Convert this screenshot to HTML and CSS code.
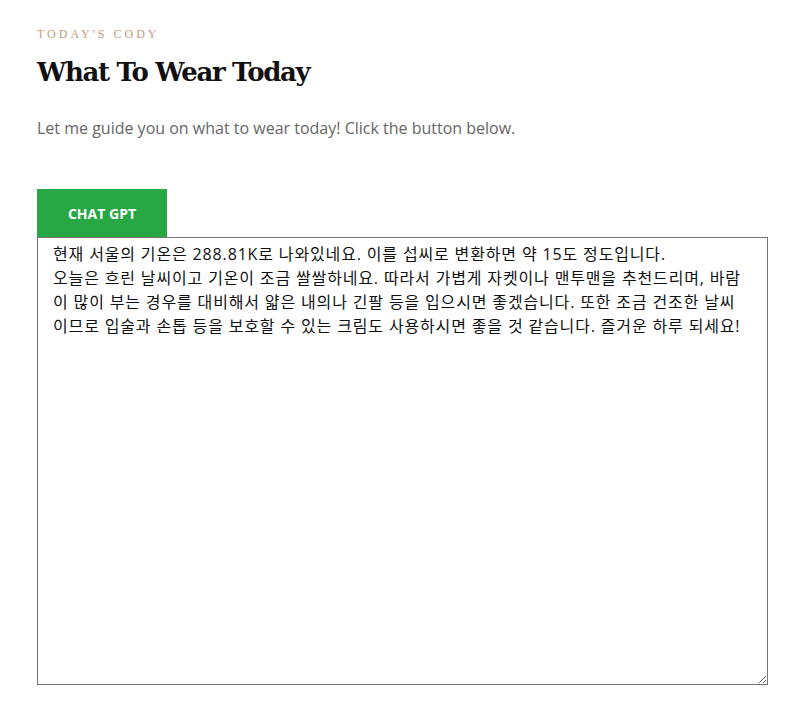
FILE: index.html
```html
<!DOCTYPE html>
<html lang="ko">
<head>
<meta charset="utf-8">
<link rel="stylesheet" href="styles.css">
</head>
<body>
<main class="page">
  <p class="eyebrow">TODAY'S CODY</p>
  <h1 class="title">What To Wear Today</h1>
  <p class="lead">Let me guide you on what to wear today! Click the button below.</p>
  <div class="chat">
    <button class="btn">CHAT GPT</button>
    <textarea class="answer">현재 서울의 기온은 288.81K로 나와있네요. 이를 섭씨로 변환하면 약 15도 정도입니다.
오늘은 흐린 날씨이고 기온이 조금 쌀쌀하네요. 따라서 가볍게 자켓이나 맨투맨을 추천드리며, 바람이 많이 부는 경우를 대비해서 얇은 내의나 긴팔 등을 입으시면 좋겠습니다. 또한 조금 건조한 날씨이므로 입술과 손톱 등을 보호할 수 있는 크림도 사용하시면 좋을 것 같습니다. 즐거운 하루 되세요!</textarea>
  </div>
</main>
</body>
</html>
```
FILE: styles.css
```css
html, body { margin: 0; padding: 0; background: #fff; }
.page { padding: 26px 26px 0 37px; }
.eyebrow {
  margin: 0;
  font-family: "Liberation Serif", serif;
  font-size: 12px;
  letter-spacing: 3px;
  color: #c49a7e;
  line-height: 16px;
}
.title {
  margin: 14px 0 0;
  font-family: "DejaVu Serif", serif;
  font-weight: bold;
  font-size: 26px;
  line-height: 32px;
  color: #111;
  letter-spacing: -1.3px;
}
.lead {
  margin: 28px 0 0;
  font-family: "Open Sans", sans-serif;
  font-size: 16px;
  line-height: 24px;
  color: #666;
}
.chat { margin-top: 49px; display: flex; flex-direction: column; align-items: flex-start; }
.btn {
  width: 130px;
  height: 48px;
  border: 0;
  background: #28a745;
  color: #fff;
  font-family: "Open Sans", sans-serif;
  font-weight: bold;
  font-size: 14px;
  cursor: pointer;
}
.answer {
  box-sizing: border-box;
  width: 731px;
  height: 448px;
  margin: 0;
  border: 1px solid #767676;
  padding: 4px 19px 4px 15px;
  font-family: "Open Sans", "Noto Sans CJK KR", sans-serif;
  font-size: 16px;
  line-height: 24px;
  letter-spacing: 0.85px;
  color: #111;
  resize: both;
}
```
